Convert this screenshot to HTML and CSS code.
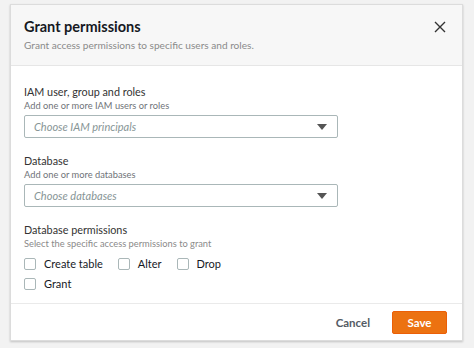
FILE: index.html
```html
<!DOCTYPE html>
<html lang="en">
<head>
    <meta charset="UTF-8">
    <meta name="viewport" content="width=device-width, initial-scale=1.0">
    <title>Grant permissions</title>
    <link rel="stylesheet" href="styles.css">
</head>
<body>

<div class="backdrop">
    <div class="modal">
        <div class="modal-header">
            <div>
                <h1>Grant permissions</h1>
                <p class="subtitle">Grant access permissions to specific users and roles.</p>
            </div>
            <button class="close" aria-label="Close">
                <svg width="12" height="12" viewBox="0 0 12 12">
                    <path d="M1 1 L11 11 M11 1 L1 11" stroke="#333" stroke-width="1.4" fill="none"/>
                </svg>
            </button>
        </div>

        <div class="modal-body">
            <div class="field">
                <label class="field-label">IAM user, group and roles</label>
                <div class="field-hint">Add one or more IAM users or roles</div>
                <div class="select">
                    <span>Choose IAM principals</span>
                    <span class="caret"></span>
                </div>
            </div>

            <div class="field">
                <label class="field-label">Database</label>
                <div class="field-hint">Add one or more databases</div>
                <div class="select">
                    <span>Choose databases</span>
                    <span class="caret"></span>
                </div>
            </div>

            <div class="field">
                <label class="field-label">Database permissions</label>
                <div class="field-hint light">Select the specific access permissions to grant</div>
                <div class="checks">
                    <label class="check"><span class="box"></span>Create table</label>
                    <label class="check"><span class="box"></span>Alter</label>
                    <label class="check"><span class="box"></span>Drop</label>
                </div>
                <div class="checks">
                    <label class="check"><span class="box"></span>Grant</label>
                </div>
            </div>
        </div>

        <div class="modal-footer">
            <button class="btn-link">Cancel</button>
            <button class="btn-primary">Save</button>
        </div>
    </div>
</div>

</body>
</html>
```

FILE: styles.css
```css
body {
    font-family: Lato, "Open Sans", sans-serif;
    margin: 0;
    padding: 0;
    background-color: #f2f2f2;
    color: #16191f;
}
.backdrop {
    padding: 4px 11px 10px 10px;
}
.modal {
    background-color: white;
    border: 1px solid #dcdcdc;
    box-shadow: 0 1px 2px rgba(0, 0, 0, 0.2);
}
.modal-header {
    display: flex;
    justify-content: space-between;
    align-items: flex-start;
    padding: 14px 16px 0 13px;
    height: 46px;
    background-color: #f7f7f7;
    border-bottom: 1px solid #e6e6e6;
}
h1 {
    margin: 0;
    font-size: 14.5px;
    font-weight: bold;
    color: #16191f;
    line-height: 16px;
}
.subtitle {
    margin: 3px 0 0;
    font-size: 10.1px;
    line-height: 14px;
    color: #8a8a8a;
}
.close {
    background: none;
    border: none;
    padding: 0;
    margin-top: 2px;
    cursor: pointer;
}
.modal-body {
    padding: 19px 13px 12px;
    border-bottom: 1px solid #eaeaea;
}
.field {
    margin-bottom: 16px;
}
.field:last-child {
    margin-bottom: 0;
}
.field-label {
    display: block;
    font-size: 10.8px;
    color: #333;
    line-height: 14px;
}
.field-hint {
    font-size: 9.3px;
    color: #6f7378;
    line-height: 14px;
    margin-bottom: 2px;
}
.field-hint.light {
    color: #8a8a8a;
}
.select {
    width: 314px;
    height: 23px;
    box-sizing: border-box;
    border: 1px solid #aab7b8;
    border-radius: 2px;
    display: flex;
    align-items: center;
    justify-content: space-between;
    padding: 0 10px 0 9px;
    font-size: 11px;
    font-style: italic;
    color: #879596;
}
.caret {
    width: 0;
    height: 0;
    border-left: 5px solid transparent;
    border-right: 5px solid transparent;
    border-top: 6px solid #555;
}
.checks {
    display: flex;
    gap: 15px;
    margin-top: 6px;
}
.check {
    display: flex;
    align-items: center;
    gap: 8px;
    font-size: 11px;
    line-height: 14px;
    color: #16191f;
}
.box {
    width: 10px;
    height: 10px;
    border: 1px solid #aab7b8;
    border-radius: 2px;
    background: white;
}
.modal-footer {
    display: flex;
    justify-content: flex-end;
    align-items: center;
    gap: 16px;
    padding: 7px 15px 6px;
}
.btn-link {
    background: none;
    border: none;
    font-family: inherit;
    font-size: 11.5px;
    font-weight: bold;
    color: #545b64;
    cursor: pointer;
}
.btn-primary {
    background-color: #ec7211;
    border: 1px solid #eb5f07;
    border-radius: 2px;
    color: white;
    font-family: inherit;
    font-size: 11.5px;
    font-weight: bold;
    width: 55px;
    height: 23px;
    cursor: pointer;
}
```
